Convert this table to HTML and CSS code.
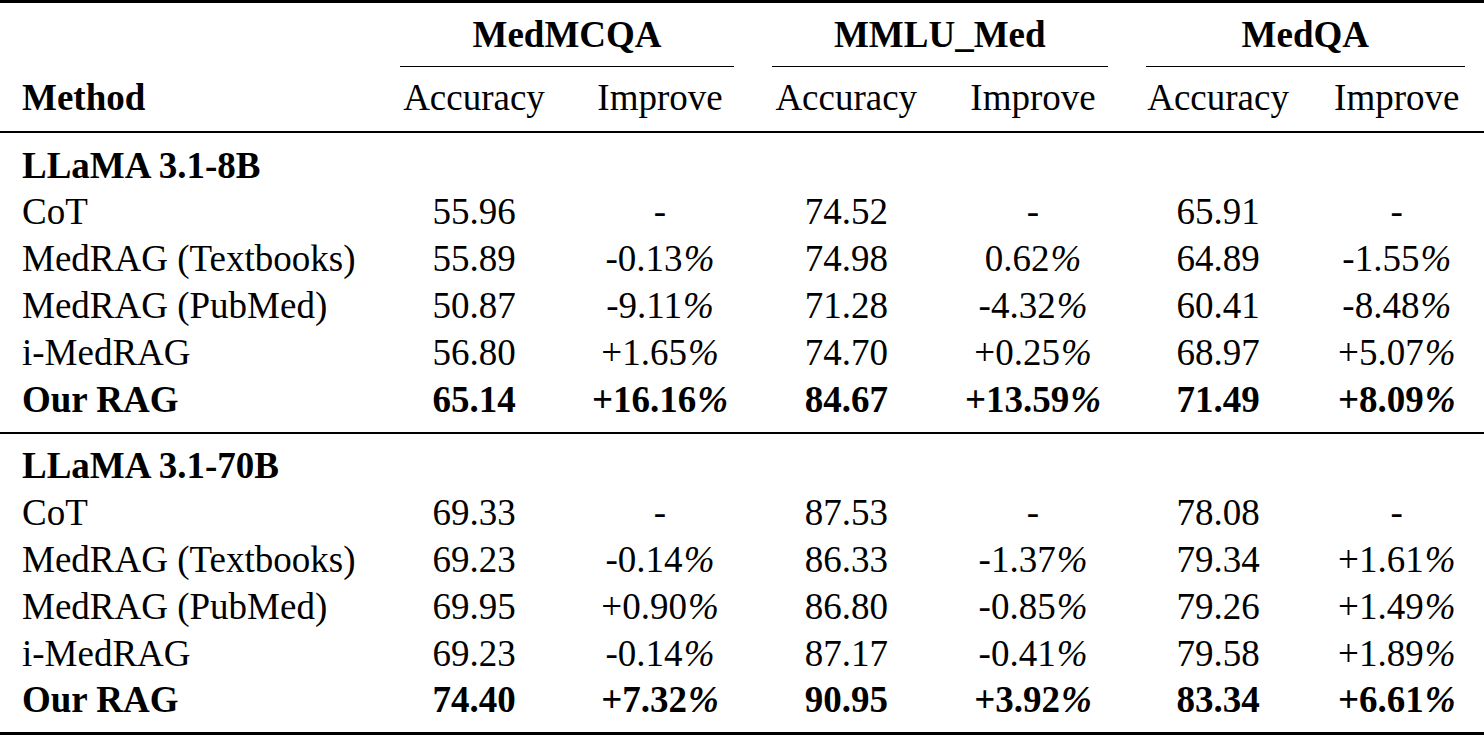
FILE: index.html
```html
<!DOCTYPE html>
<html lang="en">
<head>
<meta charset="utf-8">
<title>Results</title>
<link rel="stylesheet" href="styles.css">
</head>
<body>
<table class="results">
  <colgroup>
    <col class="c-method">
    <col class="c-a1"><col class="c-i1">
    <col class="c-a2"><col class="c-i2">
    <col class="c-a3"><col class="c-i3">
  </colgroup>
  <thead>
    <tr class="head-top">
      <th></th>
      <th colspan="2"><div class="gname">MedMCQA</div><div class="cmid"></div></th>
      <th colspan="2"><div class="gname">MMLU_Med</div><div class="cmid"></div></th>
      <th colspan="2"><div class="gname">MedQA</div><div class="cmid"></div></th>
    </tr>
    <tr class="head-sub">
      <th class="method strong">Method</th>
      <th>Accuracy</th><th>Improve</th>
      <th>Accuracy</th><th>Improve</th>
      <th>Accuracy</th><th>Improve</th>
    </tr>
  </thead>
  <tbody class="grp">
    <tr class="first"><td class="method strong">LLaMA 3.1-8B</td><td></td><td></td><td></td><td></td><td></td><td></td></tr>
    <tr><td class="method">CoT</td><td>55.96</td><td>-</td><td>74.52</td><td>-</td><td>65.91</td><td>-</td></tr>
    <tr><td class="method">MedRAG (Textbooks)</td><td>55.89</td><td>-0.13<span class="pct">%</span></td><td>74.98</td><td>0.62<span class="pct">%</span></td><td>64.89</td><td>-1.55<span class="pct">%</span></td></tr>
    <tr><td class="method">MedRAG (PubMed)</td><td>50.87</td><td>-9.11<span class="pct">%</span></td><td>71.28</td><td>-4.32<span class="pct">%</span></td><td>60.41</td><td>-8.48<span class="pct">%</span></td></tr>
    <tr><td class="method">i-MedRAG</td><td>56.80</td><td>+1.65<span class="pct">%</span></td><td>74.70</td><td>+0.25<span class="pct">%</span></td><td>68.97</td><td>+5.07<span class="pct">%</span></td></tr>
    <tr class="last strong"><td class="method">Our RAG</td><td>65.14</td><td>+16.16<span class="pct">%</span></td><td>84.67</td><td>+13.59<span class="pct">%</span></td><td>71.49</td><td>+8.09<span class="pct">%</span></td></tr>
  </tbody>
  <tbody class="grp final">
    <tr class="first"><td class="method strong">LLaMA 3.1-70B</td><td></td><td></td><td></td><td></td><td></td><td></td></tr>
    <tr><td class="method">CoT</td><td>69.33</td><td>-</td><td>87.53</td><td>-</td><td>78.08</td><td>-</td></tr>
    <tr><td class="method">MedRAG (Textbooks)</td><td>69.23</td><td>-0.14<span class="pct">%</span></td><td>86.33</td><td>-1.37<span class="pct">%</span></td><td>79.34</td><td>+1.61<span class="pct">%</span></td></tr>
    <tr><td class="method">MedRAG (PubMed)</td><td>69.95</td><td>+0.90<span class="pct">%</span></td><td>86.80</td><td>-0.85<span class="pct">%</span></td><td>79.26</td><td>+1.49<span class="pct">%</span></td></tr>
    <tr><td class="method">i-MedRAG</td><td>69.23</td><td>-0.14<span class="pct">%</span></td><td>87.17</td><td>-0.41<span class="pct">%</span></td><td>79.58</td><td>+1.89<span class="pct">%</span></td></tr>
    <tr class="last strong"><td class="method">Our RAG</td><td>74.40</td><td>+7.32<span class="pct">%</span></td><td>90.95</td><td>+3.92<span class="pct">%</span></td><td>83.34</td><td>+6.61<span class="pct">%</span></td></tr>
  </tbody>
</table>
</body>
</html>
```
FILE: styles.css
```css
html, body {
  margin: 0;
  padding: 0;
  background: #fff;
}

body {
  font-family: "Liberation Serif", "Times New Roman", serif;
  color: #000;
}

.results {
  border-collapse: separate;
  border-spacing: 0;
  table-layout: fixed;
  width: 1484px;
  font-size: 37px;
  line-height: 46.8px;
}

.c-method { width: 381px; }
.c-a1 { width: 186px; }
.c-i1 { width: 186px; }
.c-a2 { width: 186.5px; }
.c-i2 { width: 187px; }
.c-a3 { width: 183px; }
.c-i3 { width: 174.5px; }

.results th,
.results td {
  padding: 0;
  text-align: center;
  font-weight: normal;
  white-space: nowrap;
  vertical-align: top;
}

.results .method {
  text-align: left;
  padding-left: 22px;
}

.results .strong,
.results .strong td {
  font-weight: bold;
}

.pct {
  font-style: italic;
  margin-left: 1px;
}

.head-top th {
  border-top: 3px solid #000;
  padding-top: 8.6px;
}

.gname {
  font-weight: bold;
}

.cmid {
  height: 0;
  border-top: 1.5px solid #000;
  margin: 7.6px 19px 0;
}

.head-sub th {
  padding-top: 8.5px;
  padding-bottom: 9.2px;
  border-bottom: 2px solid #000;
}

.grp .first td {
  padding-top: 9.1px;
}

.grp .last td {
  padding-bottom: 9px;
  border-bottom: 2px solid #000;
}

.final .last td {
  padding-bottom: 8px;
  border-bottom: 3px solid #000;
}
```
